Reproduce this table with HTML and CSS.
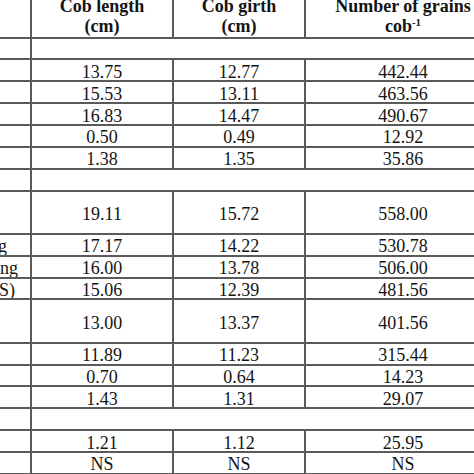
FILE: index.html
```html
<!DOCTYPE html>
<html>
<head>
<meta charset="utf-8">
<link rel="stylesheet" href="styles.css">
</head>
<body>
<table class="data">
  <colgroup>
    <col class="c-label">
    <col class="c-len">
    <col class="c-girth">
    <col class="c-grains">
  </colgroup>
  <thead>
    <tr class="head">
      <th class="label"></th>
      <th>Cob length<br>(cm)</th>
      <th>Cob girth<br>(cm)</th>
      <th>Number of grains<br>cob<sup>-1</sup></th>
    </tr>
  </thead>
  <tbody>
    <tr><td class="label"></td><td colspan="3" class="span"></td></tr>
    <tr><td class="label"></td><td>13.75</td><td>12.77</td><td>442.44</td></tr>
    <tr><td class="label"></td><td>15.53</td><td>13.11</td><td>463.56</td></tr>
    <tr><td class="label"></td><td>16.83</td><td>14.47</td><td>490.67</td></tr>
    <tr><td class="label"></td><td>0.50</td><td>0.49</td><td>12.92</td></tr>
    <tr><td class="label"></td><td>1.38</td><td>1.35</td><td>35.86</td></tr>
    <tr><td class="label"></td><td colspan="3" class="span"></td></tr>
    <tr class="tall"><td class="label"></td><td>19.11</td><td>15.72</td><td>558.00</td></tr>
    <tr><td class="label"><span class="cut cut-g">ing</span></td><td>17.17</td><td>14.22</td><td>530.78</td></tr>
    <tr><td class="label"><span class="cut cut-ng">ing</span></td><td>16.00</td><td>13.78</td><td>506.00</td></tr>
    <tr><td class="label"><span class="cut cut-s">(S)</span></td><td>15.06</td><td>12.39</td><td>481.56</td></tr>
    <tr class="tall"><td class="label"></td><td>13.00</td><td>13.37</td><td>401.56</td></tr>
    <tr><td class="label"></td><td>11.89</td><td>11.23</td><td>315.44</td></tr>
    <tr><td class="label"></td><td>0.70</td><td>0.64</td><td>14.23</td></tr>
    <tr><td class="label"></td><td>1.43</td><td>1.31</td><td>29.07</td></tr>
    <tr><td class="label"></td><td colspan="3" class="span"></td></tr>
    <tr><td class="label"></td><td>1.21</td><td>1.12</td><td>25.95</td></tr>
    <tr><td class="label"></td><td>NS</td><td>NS</td><td>NS</td></tr>
  </tbody>
</table>
</body>
</html>
```

FILE: styles.css
```css
html, body {
  margin: 0;
  padding: 0;
  overflow: hidden;
  background: #ffffff;
}

.data {
  border-collapse: collapse;
  table-layout: fixed;
  width: 500px;
  margin-top: -4px;
  font-family: "Liberation Serif", "Times New Roman", serif;
  font-size: 18px;
  color: #141414;
}

.c-label { width: 31px; }
.c-len { width: 142px; }
.c-girth { width: 132px; }
.c-grains { width: 195px; }

.data th,
.data td {
  border: 2px solid #5a5a5a;
  padding: 0;
  text-align: center;
  vertical-align: middle;
  white-space: nowrap;
  overflow: hidden;
}

.data th {
  font-weight: bold;
  vertical-align: top;
  border-top: none;
  line-height: 20px;
}

.data td {
  line-height: 16px;
  padding-top: 3px;
}

.data .label {
  border-left: none;
  text-align: left;
}

.data tr > :last-child {
  border-right: none;
}

.head { height: 41.5px; }

.data tbody tr { height: 21.87px; }
.data tbody tr.tall { height: 43.3px; }

sup {
  font-size: 11px;
  line-height: 0;
  vertical-align: 6px;
}

.cut { display: inline-block; }
.cut-g { margin-left: -16px; }
.cut-ng { margin-left: -5px; }
.cut-s { margin-left: -7px; }
```
